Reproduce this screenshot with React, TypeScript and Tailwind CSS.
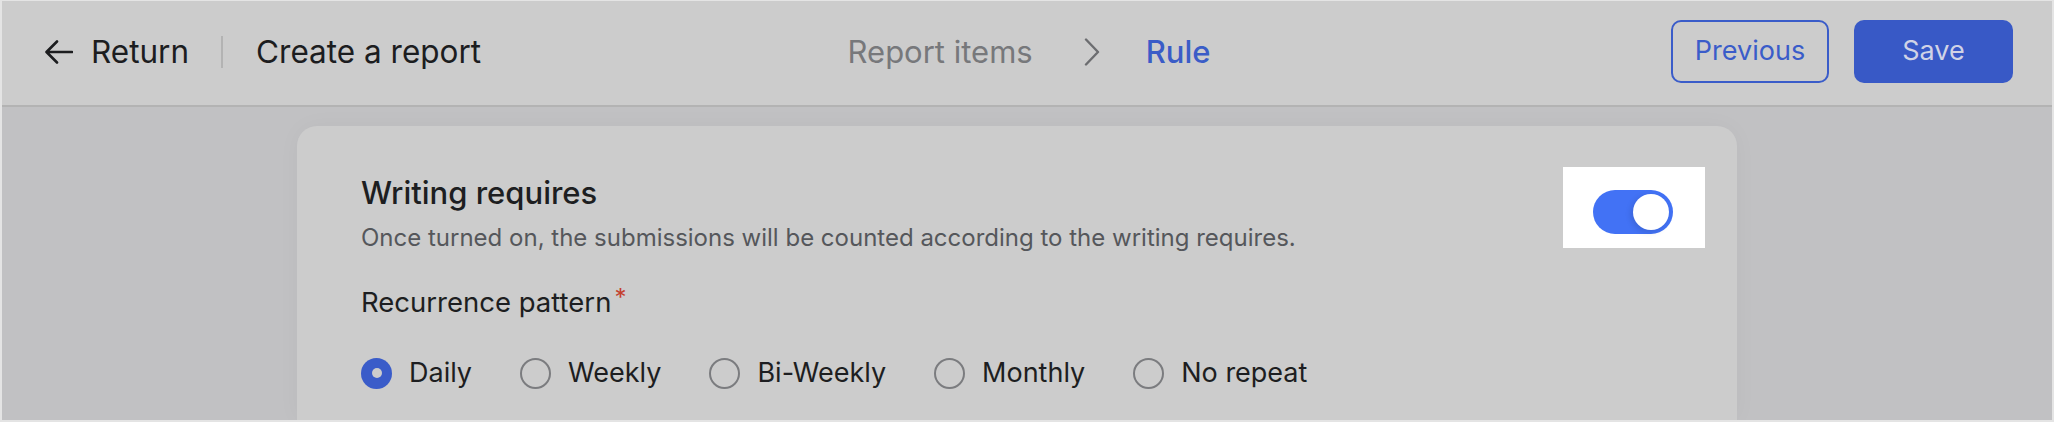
import { useState } from "react";

const options = ["Daily", "Weekly", "Bi-Weekly", "Monthly", "No repeat"];

function BackArrow() {
  return (
    <svg width="28" height="24" viewBox="0 0 28 24" fill="none">
      <path
        d="M27 12H2M12 1.5 1.5 12 12 22.5"
        stroke="#1c1d1f"
        strokeWidth="2.6"
        strokeLinecap="round"
        strokeLinejoin="round"
      />
    </svg>
  );
}

function Chevron() {
  return (
    <svg width="20" height="28" viewBox="0 0 20 28" fill="none">
      <path
        d="M4 1.5 16 14 4 26.5"
        stroke="#6c6d70"
        strokeWidth="2.4"
        strokeLinecap="round"
        strokeLinejoin="round"
      />
    </svg>
  );
}

function Radio({ checked }: { checked: boolean }) {
  if (checked)
    return (
      <span className="w-[31px] h-[31px] rounded-full bg-[#3a5cc9] flex items-center justify-center shrink-0">
        <span className="w-[10px] h-[10px] rounded-full bg-[#cccccc]" />
      </span>
    );
  return (
    <span className="w-[31px] h-[31px] rounded-full border-2 border-[#7b7c7f] shrink-0" />
  );
}

export default function App() {
  const [pattern, setPattern] = useState("Daily");
  const [on, setOn] = useState(true);

  return (
    <div className="w-[2054px] h-[422px] overflow-hidden bg-[#c1c1c3] border-t border-x-2 border-b-2 border-[#e4e4e4] flex flex-col font-['Inter','Noto_Sans',sans-serif]">
      <header className="h-[106px] shrink-0 bg-[#cccccc] border-b-2 border-[#b3b3b3] grid grid-cols-[1fr_auto_1fr] items-center pl-[43px] pr-[39px] pb-[3px]">
        <div className="flex items-center text-[31.5px] leading-[40px] text-[#1c1d1f]">
          <BackArrow />
          <span className="ml-[18px]">Return</span>
          <span className="ml-[32px] mr-[33px] w-[2px] h-[32px] bg-[#b3b3b3]" />
          <span>Create a report</span>
        </div>
        <div className="flex items-center text-[31px] leading-[40px]">
          <span className="text-[#77787b]">Report items</span>
          <span className="ml-[49px] mr-[44px] flex">
            <Chevron />
          </span>
          <span className="text-[#3a5cc7] font-medium">Rule</span>
        </div>
        <div className="flex justify-end gap-[25px]">
          <button className="w-[158px] h-[63px] rounded-[10px] border-2 border-[#3a5cc9] text-[#3a5cc9] text-[27px]">
            Previous
          </button>
          <button className="w-[159px] h-[63px] rounded-[10px] bg-[#3859c6] text-[#d0d3e6] text-[27px]">
            Save
          </button>
        </div>
      </header>

      <main className="flex-1 pl-[295px] pr-[315px] pt-[19px]">
        <div className="h-full bg-[#cccccc] rounded-t-[20px] pl-[64px] pr-[32px] pt-[47px] shadow-[0_0_24px_rgba(0,0,0,0.03)]">
          <div className="flex items-start justify-between">
            <div>
              <h2 className="text-[31px] leading-[40px] font-medium text-[#1d1e21]">
                Writing requires
              </h2>
              <p className="mt-[9px] text-[24px] leading-[32px] text-[#55575b]">
                Once turned on, the submissions will be counted according to the writing requires.
              </p>
            </div>
            <div className="mt-[-6px] bg-white pt-[23px] pb-[14px] pl-[30px] pr-[32px]">
              <button
                onClick={() => setOn(!on)}
                className="w-[80px] h-[44px] rounded-full bg-[#4272f5] flex items-center justify-end pr-[4px]"
              >
                <span className="w-[36px] h-[36px] rounded-full bg-white shadow-[-2px_2px_6px_rgba(0,0,0,0.12)]" />
              </button>
            </div>
          </div>

          <div className="mt-[30px] text-[27.5px] leading-[36px] text-[#1d1e21] flex items-start">
            <span>Recurrence pattern</span>
            <span className="ml-[3px] mt-[2px] text-[24px] leading-[24px] text-[#c4402f]">*</span>
          </div>

          <div className="mt-[35px] flex items-center gap-[48px]">
            {options.map((o) => (
              <label
                key={o}
                onClick={() => setPattern(o)}
                className="flex items-center gap-[17px] text-[27px] leading-[36px] text-[#1d1e21] cursor-pointer"
              >
                <Radio checked={pattern === o} />
                <span>{o}</span>
              </label>
            ))}
          </div>
        </div>
      </main>
    </div>
  );
}
